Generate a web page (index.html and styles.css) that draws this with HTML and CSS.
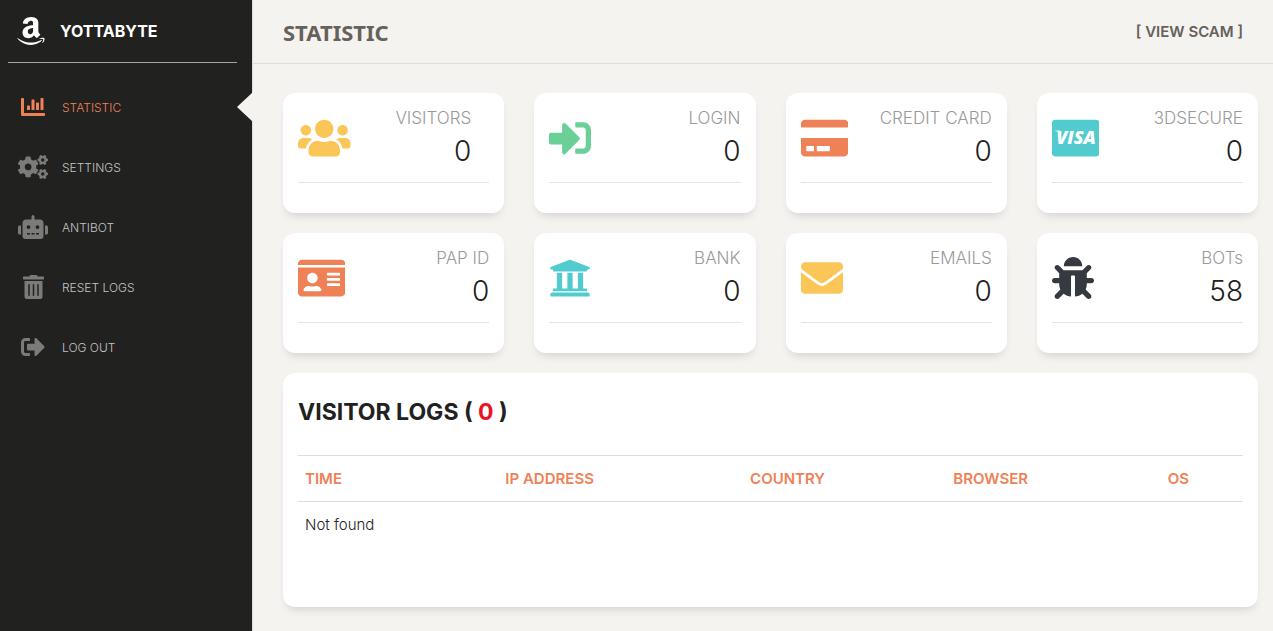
FILE: index.html
```html
<!DOCTYPE html>
<html lang="en">
<head>
<meta charset="utf-8">
<meta name="viewport" content="width=device-width, initial-scale=1">
<title>Statistic</title>
<link rel="stylesheet" href="styles.css">
</head>
<body>
<div class="layout">
  <aside class="sidebar">
    <a class="brand" href="#">
      <svg class="brand-logo" viewBox="0 0 448 512" aria-hidden="true"><path d="M257.2 162.7c-48.7 1.8-169.5 15.5-169.5 117.5 0 109.5 138.3 114 183.5 43.2 6.5 10.2 35.4 37.5 45.3 46.8l56.8-56S341 288.9 341 261.4V114.3C341 89 316.5 32 228.7 32 140.7 32 94 87 94 136.3l73.5 6.8c16.3-49.5 54.2-49.5 54.2-49.5 40.7-.1 35.5 29.8 35.5 69.1zm0 86.8c0 80-84.2 68-84.2 17.2 0-47.2 50.5-56.7 84.2-57.8v40.6zm136 163.5c-7.7 10-70 67-174.5 67S34.2 408.5 9.7 379c-6.8-7.7 1-11.3 5.5-8.3C88.5 415.2 203 488.5 387.7 401c7.5-3.7 13.3 2 5.5 12zm39.8 2.2c-6.5 15.8-16 26.8-21.2 31-5.5 4.5-9.5 2.7-6.5-3.8s19.3-46.5 12.7-55c-6.5-8.3-37-4.3-48-3.2-10.8 1-13 2-14-.3-2.3-5.7 21.7-15.5 37.5-17.5 15.7-1.8 41-.8 46 5.7 3.7 5.1 0 27.1-6.5 43.1z"/></svg>
      <span>YOTTABYTE</span>
    </a>
    <nav class="nav">
      <a class="nav-item active" href="#">
        <span class="nav-icon"><svg viewBox="0 0 512 512" aria-hidden="true"><path d="M332.8 320h38.4c6.4 0 12.8-6.4 12.8-12.8V172.8c0-6.4-6.4-12.8-12.8-12.8h-38.4c-6.4 0-12.8 6.4-12.8 12.8v134.4c0 6.4 6.4 12.8 12.8 12.8zm96 0h38.4c6.4 0 12.8-6.4 12.8-12.8V76.8c0-6.4-6.4-12.8-12.8-12.8h-38.4c-6.4 0-12.8 6.4-12.8 12.8v230.4c0 6.4 6.4 12.8 12.8 12.8zm-288 0h38.4c6.4 0 12.8-6.4 12.8-12.8v-70.4c0-6.4-6.4-12.8-12.8-12.8h-38.4c-6.4 0-12.8 6.4-12.8 12.8v70.4c0 6.4 6.4 12.8 12.8 12.8zm96 0h38.4c6.4 0 12.8-6.4 12.8-12.8V108.8c0-6.4-6.4-12.8-12.8-12.8h-38.4c-6.4 0-12.8 6.4-12.8 12.8v198.4c0 6.4 6.4 12.8 12.8 12.8zM496 384H64V80c0-8.84-7.16-16-16-16H16C7.16 64 0 71.16 0 80v336c0 17.67 14.33 32 32 32h464c8.84 0 16-7.16 16-16v-32c0-8.84-7.16-16-16-16z"/></svg></span>
        <span>STATISTIC</span>
      </a>
      <a class="nav-item" href="#">
        <span class="nav-icon"><svg viewBox="0 0 640 512" aria-hidden="true"><path d="M512.1 191l-8.2 14.3c-3 5.3-9.4 7.5-15.1 5.4-11.8-4.4-22.6-10.7-32.1-18.6-4.6-3.8-5.8-10.5-2.8-15.7l8.2-14.3c-6.9-8-12.3-17.3-15.9-27.4h-16.5c-6 0-11.2-4.3-12.2-10.3-2-12-2.1-24.6 0-37.1 1-6 6.2-10.4 12.2-10.4h16.5c3.6-10.1 9-19.4 15.9-27.4l-8.2-14.3c-3-5.2-1.9-11.9 2.8-15.7 9.5-7.9 20.4-14.2 32.1-18.6 5.7-2.1 12.1.1 15.1 5.4l8.2 14.3c10.5-1.9 21.2-1.9 31.7 0L552 6.3c3-5.3 9.4-7.5 15.1-5.4 11.8 4.4 22.6 10.7 32.1 18.6 4.6 3.8 5.8 10.5 2.8 15.7l-8.2 14.3c6.9 8 12.3 17.3 15.9 27.4h16.5c6 0 11.2 4.3 12.2 10.3 2 12 2.1 24.6 0 37.1-1 6-6.2 10.4-12.2 10.4h-16.5c-3.6 10.1-9 19.4-15.9 27.4l8.2 14.3c3 5.2 1.9 11.9-2.8 15.7-9.5 7.9-20.4 14.2-32.1 18.6-5.7 2.1-12.1-.1-15.1-5.4l-8.2-14.3c-10.4 1.9-21.2 1.9-31.7 0zm-10.5-58.8c38.5 29.6 82.4-14.3 52.8-52.8-38.5-29.7-82.4 14.3-52.8 52.8zM386.3 286.1l33.7 16.8c10.1 5.8 14.5 18.1 10.5 29.1-8.9 24.2-26.4 46.4-42.6 65.8-7.4 8.9-20.2 11.1-30.3 5.3l-29.1-16.8c-16 13.7-34.6 24.6-54.9 31.7v33.6c0 11.6-8.3 21.6-19.7 23.6-24.6 4.2-50.4 4.4-75.9 0-11.5-2-20-11.9-20-23.6V418c-20.3-7.2-38.9-18-54.9-31.7L74 403c-10 5.8-22.9 3.6-30.3-5.3-16.2-19.4-33.3-41.6-42.2-65.7-4-10.9.4-23.2 10.5-29.1l33.3-16.8c-3.9-20.9-3.9-42.4 0-63.4L12 205.8c-10.1-5.8-14.6-18.1-10.5-29 8.9-24.2 26-46.4 42.2-65.8 7.4-8.9 20.2-11.1 30.3-5.3l29.1 16.8c16-13.7 34.6-24.6 54.9-31.7V57.1c0-11.5 8.2-21.5 19.6-23.5 24.6-4.2 50.5-4.4 76-.1 11.5 2 20 11.9 20 23.6v33.6c20.3 7.2 38.9 18 54.9 31.7l29.1-16.8c10-5.8 22.9-3.6 30.3 5.3 16.2 19.4 33.2 41.6 42.1 65.8 4 10.9.1 23.2-10 29.1l-33.7 16.8c3.9 21 3.9 42.5 0 63.5zm-117.6 21.1c59.2-77-28.7-164.9-105.7-105.7-59.2 77 28.7 164.9 105.7 105.7zm243.4 182.7l-8.2 14.3c-3 5.3-9.4 7.5-15.1 5.4-11.8-4.4-22.6-10.7-32.1-18.6-4.6-3.8-5.8-10.5-2.8-15.7l8.2-14.3c-6.9-8-12.3-17.3-15.9-27.4h-16.5c-6 0-11.2-4.3-12.2-10.3-2-12-2.1-24.6 0-37.1 1-6 6.2-10.4 12.2-10.4h16.5c3.6-10.1 9-19.4 15.9-27.4l-8.2-14.3c-3-5.2-1.9-11.9 2.8-15.7 9.5-7.9 20.4-14.2 32.1-18.6 5.7-2.1 12.1.1 15.1 5.4l8.2 14.3c10.5-1.9 21.2-1.9 31.7 0l8.2-14.3c3-5.3 9.4-7.5 15.1-5.4 11.8 4.4 22.6 10.7 32.1 18.6 4.6 3.8 5.8 10.5 2.8 15.7l-8.2 14.3c6.9 8 12.3 17.3 15.9 27.4h16.5c6 0 11.2 4.3 12.2 10.3 2 12 2.1 24.6 0 37.1-1 6-6.2 10.4-12.2 10.4h-16.5c-3.6 10.1-9 19.4-15.9 27.4l8.2 14.3c3 5.2 1.9 11.9-2.8 15.7-9.5 7.9-20.4 14.2-32.1 18.6-5.7 2.1-12.1-.1-15.1-5.4l-8.2-14.3c-10.4 1.9-21.2 1.9-31.7 0zM501.6 431c38.5 29.6 82.4-14.3 52.8-52.8-38.5-29.6-82.4 14.3-52.8 52.8z"/></svg></span>
        <span>SETTINGS</span>
      </a>
      <a class="nav-item" href="#">
        <span class="nav-icon"><svg viewBox="0 0 640 512" aria-hidden="true"><path d="M32 224H64V416H32A32 32 0 0 1 0 384V256A32 32 0 0 1 32 224Zm512-48V448a64 64 0 0 1-64 64H160a64 64 0 0 1-64-64V176a80 80 0 0 1 80-80H288V32a32 32 0 0 1 64 0V96H464A80 80 0 0 1 544 176ZM264 256a40 40 0 1 0-40 40A40 40 0 0 0 264 256Zm-8 128H192v32h64Zm96 0H288v32h64ZM456 256a40 40 0 1 0-40 40A40 40 0 0 0 456 256Zm-8 128H384v32h64ZM640 256V384a32 32 0 0 1-32 32H576V224h32A32 32 0 0 1 640 256Z"/></svg></span>
        <span>ANTIBOT</span>
      </a>
      <a class="nav-item" href="#">
        <span class="nav-icon"><svg viewBox="0 0 448 512" aria-hidden="true"><path d="M32 464a48 48 0 0 0 48 48h288a48 48 0 0 0 48-48V128H32zm272-256a16 16 0 0 1 32 0v224a16 16 0 0 1-32 0zm-96 0a16 16 0 0 1 32 0v224a16 16 0 0 1-32 0zm-96 0a16 16 0 0 1 32 0v224a16 16 0 0 1-32 0zM432 32H312l-9.400-18.700A24 24 0 0 0 281.100 0H166.800a23.720 23.720 0 0 0-21.400 13.300L136 32H16A16 16 0 0 0 0 48v32a16 16 0 0 0 16 16h416a16 16 0 0 0 16-16V48a16 16 0 0 0-16-16z"/></svg></span>
        <span>RESET LOGS</span>
      </a>
      <a class="nav-item" href="#">
        <span class="nav-icon"><svg viewBox="0 0 512 512" aria-hidden="true"><path d="M497 273L329 441c-15 15-41 4.500-41-17v-96H152c-13.300 0-24-10.700-24-24v-96c0-13.300 10.700-24 24-24h136V88c0-21.400 25.900-32 41-17l168 168c9.300 9.400 9.300 24.600 0 34zM192 436v-40c0-6.600-5.400-12-12-12H96c-17.700 0-32-14.300-32-32V160c0-17.700 14.300-32 32-32h84c6.600 0 12-5.400 12-12V76c0-6.600-5.400-12-12-12H96c-53 0-96 43-96 96v192c0 53 43 96 96 96h84c6.600 0 12-5.400 12-12z"/></svg></span>
        <span>LOG OUT</span>
      </a>
    </nav>
  </aside>

  <div class="page">
    <header class="topbar">
      <h1 class="page-title">STATISTIC</h1>
      <a class="view-link" href="#">[ VIEW SCAM ]</a>
    </header>

    <main class="content">
      <section class="stats">
        <article class="card stat stat-inset">
          <div class="stat-body">
            <svg class="stat-icon yellow" viewBox="0 0 640 512" aria-hidden="true"><path d="M96 224c35.300 0 64-28.700 64-64s-28.700-64-64-64-64 28.700-64 64 28.700 64 64 64zm448 0c35.300 0 64-28.700 64-64s-28.700-64-64-64-64 28.700-64 64 28.700 64 64 64zm32 32h-64c-17.600 0-33.500 7.100-45.100 18.600 40.300 22.100 68.900 62 75.100 109.400h66c17.700 0 32-14.300 32-32v-32c0-35.300-28.700-64-64-64zm-256 0c61.900 0 112-50.100 112-112S381.900 32 320 32 208 82.100 208 144s50.100 112 112 112zm76.800 32h-8.300c-20.800 10-43.900 16-68.500 16s-47.600-6-68.500-16h-8.300C179.600 288 128 339.600 128 403.200V432c0 26.500 21.500 48 48 48h288c26.500 0 48-21.500 48-48v-28.800c0-63.600-51.600-115.200-115.200-115.200zm-223.700-13.400C161.500 263.100 145.600 256 128 256H64c-35.300 0-64 28.700-64 64v32c0 17.700 14.300 32 32 32h65.900c6.300-47.400 34.900-87.300 75.200-109.400z"/></svg>
            <div class="stat-text"><p class="stat-label">VISITORS</p><p class="stat-value">0</p></div>
          </div>
        </article>
        <article class="card stat">
          <div class="stat-body">
            <svg class="stat-icon green" viewBox="0 0 512 512" aria-hidden="true"><path d="M416 448h-84c-6.600 0-12-5.400-12-12v-40c0-6.600 5.400-12 12-12h84c17.700 0 32-14.300 32-32V160c0-17.700-14.300-32-32-32h-84c-6.600 0-12-5.400-12-12V76c0-6.600 5.400-12 12-12h84c53 0 96 43 96 96v192c0 53-43 96-96 96zm-47-201L201 79c-15-15-41-4.500-41 17v96H24c-13.300 0-24 10.700-24 24v96c0 13.300 10.700 24 24 24h136v96c0 21.500 26 32 41 17l168-168c9.300-9.400 9.300-24.600 0-34z"/></svg>
            <div class="stat-text"><p class="stat-label">LOGIN</p><p class="stat-value">0</p></div>
          </div>
        </article>
        <article class="card stat">
          <div class="stat-body">
            <svg class="stat-icon orange" viewBox="0 0 576 512" aria-hidden="true"><path d="M0 432c0 26.500 21.500 48 48 48h480c26.500 0 48-21.500 48-48V256H0v176zm192-68c0-6.600 5.400-12 12-12h136c6.600 0 12 5.400 12 12v40c0 6.600-5.400 12-12 12H204c-6.600 0-12-5.400-12-12v-40zm-128 0c0-6.600 5.400-12 12-12h72c6.600 0 12 5.400 12 12v40c0 6.600-5.400 12-12 12H76c-6.600 0-12-5.400-12-12v-40zM576 80v48H0V80c0-26.500 21.500-48 48-48h480c26.500 0 48 21.500 48 48z"/></svg>
            <div class="stat-text"><p class="stat-label">CREDIT CARD</p><p class="stat-value">0</p></div>
          </div>
        </article>
        <article class="card stat">
          <div class="stat-body">
            <svg class="stat-icon teal" viewBox="0 0 576 512" role="img" aria-label="Visa"><rect y="32" width="576" height="448" rx="40"/><path class="cutout" d="M40 166h54l24 38-20-6c-16-16-34-24-58-28z"/><text class="visa-text" x="292" y="332" text-anchor="middle">VISA</text></svg>
            <div class="stat-text"><p class="stat-label">3DSECURE</p><p class="stat-value">0</p></div>
          </div>
        </article>
        <article class="card stat">
          <div class="stat-body">
            <svg class="stat-icon orange" viewBox="0 0 576 512" aria-hidden="true"><path d="M528 32H48C21.500 32 0 53.500 0 80v16h576V80c0-26.500-21.500-48-48-48zM0 432c0 26.500 21.500 48 48 48h480c26.500 0 48-21.500 48-48V128H0v304zm352-232c0-4.400 3.600-8 8-8h144c4.400 0 8 3.600 8 8v16c0 4.400-3.600 8-8 8H360c-4.400 0-8-3.600-8-8v-16zm0 64c0-4.400 3.600-8 8-8h144c4.400 0 8 3.600 8 8v16c0 4.400-3.600 8-8 8H360c-4.400 0-8-3.600-8-8v-16zm0 64c0-4.400 3.600-8 8-8h144c4.400 0 8 3.600 8 8v16c0 4.400-3.600 8-8 8H360c-4.400 0-8-3.600-8-8v-16zM176 192c35.300 0 64 28.700 64 64s-28.700 64-64 64-64-28.700-64-64 28.700-64 64-64zM67.100 396.200C75.500 370.500 99.600 352 128 352h8.200c12.300 5.100 25.700 8 39.800 8s27.600-2.900 39.800-8h8.200c28.400 0 52.500 18.500 60.900 44.200 3.200 9.900-5.200 19.800-15.600 19.800H82.700c-10.400 0-18.800-10-15.600-19.800z"/></svg>
            <div class="stat-text"><p class="stat-label">PAP ID</p><p class="stat-value">0</p></div>
          </div>
        </article>
        <article class="card stat">
          <div class="stat-body">
            <svg class="stat-icon teal" viewBox="0 0 512 512" aria-hidden="true"><path d="M496 128v16a8 8 0 0 1-8 8h-24v12c0 6.600-5.400 12-12 12H60c-6.600 0-12-5.400-12-12v-12H24a8 8 0 0 1-8-8v-16a8 8 0 0 1 4.900-7.400l232-88a8 8 0 0 1 6.200 0l232 88A8 8 0 0 1 496 128zm-24 304H40c-13.300 0-24 10.700-24 24v16a8 8 0 0 0 8 8h464a8 8 0 0 0 8-8v-16c0-13.300-10.700-24-24-24zM96 192v192H60c-6.600 0-12 5.400-12 12v20h416v-20c0-6.600-5.400-12-12-12h-36V192h-64v192h-64V192h-64v192h-64V192H96z"/></svg>
            <div class="stat-text"><p class="stat-label">BANK</p><p class="stat-value">0</p></div>
          </div>
        </article>
        <article class="card stat">
          <div class="stat-body">
            <svg class="stat-icon yellow" viewBox="0 0 512 512" aria-hidden="true"><path d="M502.300 190.800c3.900-3.100 9.700-.2 9.700 4.700V400c0 26.500-21.500 48-48 48H48c-26.500 0-48-21.500-48-48V195.600c0-5 5.700-7.800 9.700-4.700 22.400 17.400 52.100 39.500 154.100 113.600 21.100 15.400 56.700 47.800 92.200 47.600 35.700.3 72-32.800 92.300-47.600 102-74.100 131.600-96.300 154-113.700zM256 320c23.200.4 56.600-29.200 73.400-41.400 132.700-96.300 142.800-104.700 173.400-128.700 5.800-4.500 9.200-11.500 9.200-18.900v-19c0-26.500-21.500-48-48-48H48c-26.500 0-48 21.500-48 48v19c0 7.400 3.400 14.300 9.200 18.900 30.600 23.900 40.700 32.400 173.400 128.700 16.800 12.200 50.200 41.800 73.400 41.400z"/></svg>
            <div class="stat-text"><p class="stat-label">EMAILS</p><p class="stat-value">0</p></div>
          </div>
        </article>
        <article class="card stat">
          <div class="stat-body">
            <svg class="stat-icon dark" viewBox="0 0 512 512" aria-hidden="true"><path d="M512 288.900c-.5 17.400-15.200 31.100-32.700 31.100H424v16c0 21.900-4.900 42.600-13.600 61.100l60.200 60.300c12.500 12.500 12.500 32.700 0 45.200-12.500 12.500-32.700 12.500-45.200 0l-54.800-54.700C345.900 468 314.400 480 280 480V236c0-6.600-5.400-12-12-12h-24c-6.600 0-12 5.400-12 12v244c-34.400 0-65.900-12-90.600-32.100l-54.800 54.700c-12.500 12.500-32.700 12.500-45.200 0-12.500-12.500-12.500-32.700 0-45.200l60.200-60.300C92.900 378.600 88 357.900 88 336v-16H32.700C15.200 320 .5 306.300 0 288.900-.5 270.800 14 256 32 256h56v-58.700l-46.600-46.700c-12.500-12.500-12.500-32.700 0-45.200 12.500-12.500 32.700-12.500 45.200 0L141.300 160h229.400l54.700-54.600c12.500-12.500 32.700-12.500 45.200 0 12.500 12.500 12.500 32.700 0 45.200L424 197.300V256h56c18 0 32.500 14.800 32 32.900zM257 0c-61.900 0-112 50.100-112 112h224C369 50.100 318.900 0 257 0z"/></svg>
            <div class="stat-text"><p class="stat-label">BOTs</p><p class="stat-value">58</p></div>
          </div>
        </article>
      </section>

      <section class="card logs">
        <h2 class="logs-title">VISITOR LOGS ( <span class="count">0</span> )</h2>
        <table class="logs-table">
          <colgroup><col class="c-time"><col class="c-ip"><col class="c-country"><col class="c-browser"><col></colgroup>
          <thead>
            <tr><th scope="col">TIME</th><th scope="col">IP ADDRESS</th><th scope="col">COUNTRY</th><th scope="col">BROWSER</th><th scope="col">OS</th></tr>
          </thead>
          <tbody>
            <tr><td colspan="5">Not found</td></tr>
          </tbody>
        </table>
      </section>
    </main>
  </div>
</div>
</body>
</html>
```
FILE: styles.css
```css
* {
  box-sizing: border-box;
}

body {
  margin: 0;
  background: #f4f3ef;
  color: #212120;
  font-family: Inter, "Liberation Sans", sans-serif;
  font-size: 15px;
}

h1,
h2,
p {
  margin: 0;
}

a {
  color: inherit;
  text-decoration: none;
}

svg {
  display: block;
  fill: currentColor;
}

.layout {
  display: flex;
  min-height: 100vh;
}

/* Sidebar */

.sidebar {
  flex: 0 0 253px;
  background: #212120;
  border-right: 1px solid #dddddd;
}

.brand {
  display: flex;
  align-items: center;
  gap: 15px;
  height: 63px;
  margin: 0 15px 0 8px;
  padding-left: 9px;
  border-bottom: 1px solid #a6a6a6;
  color: #ffffff;
  font-size: 16px;
  font-weight: 700;
}

.brand-logo {
  width: 28px;
  height: 32px;
}

.nav {
  padding-top: 14px;
}

.nav-item {
  position: relative;
  display: flex;
  align-items: center;
  gap: 14px;
  height: 60px;
  padding-left: 18px;
  color: #c4c4c3;
  font-size: 12px;
  font-weight: 300;
}

.nav-icon {
  display: flex;
  justify-content: center;
  width: 30px;
  color: #7b7b7a;
}

.nav-icon svg {
  height: 24px;
}

.nav-item.active,
.nav-item.active .nav-icon {
  color: #ef8157;
}

.nav-item.active::after {
  content: "";
  position: absolute;
  right: -1px;
  top: 15px;
  border: 15px solid transparent;
  border-left-width: 0;
  border-right: 16px solid #f4f3ef;
}

/* Top bar */

.page {
  flex: 1;
  min-width: 0;
}

.topbar {
  display: flex;
  align-items: center;
  justify-content: space-between;
  height: 64px;
  padding: 0 30px;
  border-bottom: 1px solid #dddddd;
  color: #66615b;
}

.page-title {
  font-family: "Noto Sans", sans-serif;
  font-size: 22px;
  font-weight: 700;
}

.view-link {
  font-weight: 600;
}

/* Cards */

.content {
  display: grid;
  gap: 20px;
  padding: 29px 15px 24px 30px;
}

.card {
  background: #ffffff;
  border-radius: 12px;
  box-shadow: 0 6px 10px -4px rgba(0, 0, 0, 0.15);
}

.stats {
  display: grid;
  grid-template-columns: repeat(4, minmax(0, 1fr));
  gap: 20px 30px;
}

.stat {
  height: 120px;
  padding: 0 15px;
}

.stat-body {
  display: flex;
  align-items: center;
  justify-content: space-between;
  height: 90px;
  border-bottom: 1px solid #e3e3e3;
}

.stat-icon {
  flex: none;
  height: 42px;
}

.stat-text {
  padding-top: 3px;
  text-align: right;
}

.stat-inset .stat-text {
  padding-right: 18px;
}

.stat-label {
  color: #9a9a9a;
  font-size: 17px;
  font-weight: 300;
  line-height: 24px;
  white-space: nowrap;
}

.stat-value {
  font-size: 28px;
  font-weight: 300;
  line-height: 42px;
}

.yellow { color: #fbc658; }
.green { color: #6bd098; }
.orange { color: #ef8157; }
.teal { color: #51cbce; }
.dark { color: #343a40; }

.cutout {
  fill: #ffffff;
}

.visa-text {
  fill: #ffffff;
  font-family: "Open Sans", sans-serif;
  font-size: 220px;
  font-style: italic;
  font-weight: 800;
}

/* Visitor logs */

.logs {
  min-height: 234px;
  padding: 24px 15px;
}

.logs-title {
  margin-bottom: 28px;
  font-size: 23px;
  font-weight: 700;
  line-height: 30px;
}

.count {
  color: #ee1122;
}

.logs-table {
  width: 100%;
  border-collapse: collapse;
  table-layout: fixed;
  border-top: 1px solid #dddddd;
}

.logs-table th,
.logs-table td {
  height: 46px;
  padding: 0 7px;
  text-align: left;
}

.logs-table th {
  border-bottom: 1px solid #dddddd;
  color: #ef8157;
  font-weight: 600;
}

.logs-table td {
  font-weight: 300;
}

.c-time { width: 21.2%; }
.c-ip { width: 25.9%; }
.c-country { width: 21.5%; }
.c-browser { width: 22.7%; }
```
